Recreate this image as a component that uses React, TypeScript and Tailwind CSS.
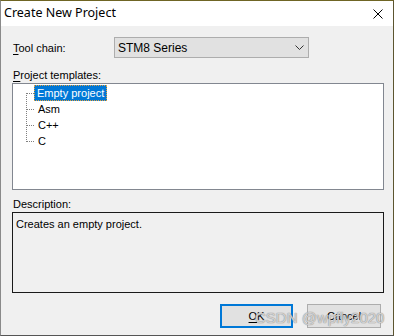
import React from "react"

// Classic Win32 "Create New Project" dialog
const ui = { fontFamily: '"Liberation Sans", Arial, sans-serif' }
const title = { fontFamily: '"Noto Sans", "Open Sans", sans-serif' }

const templates = ["Empty project", "Asm", "C++", "C"]

function TreeLines() {
  // dotted connectors, drawn relative to the tree's padding box
  const ys = [9, 25, 41, 57]
  return (
    <svg className="absolute left-0 top-0" width="40" height="80">
      <line x1="13.5" y1="9" x2="13.5" y2="58" stroke="#808080" strokeDasharray="1 1" />
      {ys.map((y) => (
        <line key={y} x1="14" y1={y + 0.5} x2="21" y2={y + 0.5} stroke="#808080" strokeDasharray="1 1" />
      ))}
    </svg>
  )
}

export default function App() {
  return (
    <div
      className="relative w-[394px] h-[336px] flex flex-col bg-[#f0f0f0] border-t border-t-[#6f6524] border-l border-l-[#8a8a8a] border-r border-r-[#5c5530] border-b border-b-[#555555] text-[11px] text-black overflow-hidden"
      style={ui}
    >
      {/* title bar */}
      <div className="h-[25px] bg-white flex items-center justify-between pl-[3px] pr-[10px]">
        <span className="text-[12.5px] leading-none" style={title}>Create New Project</span>
        <svg width="10" height="10" viewBox="0 0 10 10">
          <path d="M0.5 0.5 L9.5 9.5 M9.5 0.5 L0.5 9.5" stroke="#000" strokeWidth="1" />
        </svg>
      </div>

      <div className="flex flex-col pl-[11px]">
        {/* tool chain */}
        <div className="flex items-center mt-[11px] h-[21px]">
          <span className="w-[102px] pl-[1px] pt-[1px]">
            <span className="underline underline-offset-2">T</span>ool chain:
          </span>
          <div className="w-[195px] h-[21px] bg-[#e1e1e1] border border-[#adadad] flex items-center justify-between pl-[3px] pr-[4px]">
            <span className="text-[12px]">STM8 Series</span>
            <svg width="9" height="5" viewBox="0 0 9 5">
              <path d="M0.5 0.5 L4.5 4.5 L8.5 0.5" fill="none" stroke="#333" strokeWidth="1" />
            </svg>
          </div>
        </div>

        {/* project templates */}
        <div className="mt-[10px] h-[15px] pl-[1px] leading-[15px]">
          <span className="underline underline-offset-2">P</span>roject templates:
        </div>
        <div className="relative w-[372px] h-[107px] bg-white border border-[#828790] pt-[1px]">
          <TreeLines />
          <div className="flex flex-col pl-[21px]">
            {templates.map((t, i) => (
              <div key={t} className="h-[16px] flex items-center">
                <span
                  className={
                    i === 0
                      ? "h-[16px] px-[3px] flex items-center bg-[#0078d7] text-white outline-1 outline-dotted outline-[#e0a040] -outline-offset-1"
                      : "h-[16px] px-[4px] flex items-center"
                  }
                >
                  {t}
                </span>
              </div>
            ))}
          </div>
        </div>

        {/* description */}
        <div className="mt-[6px] h-[16px] pl-[1px] leading-[16px]">Description:</div>
        <div className="w-[372px] h-[81px] border border-[#1a1a1a] bg-[#f0f0f0] px-[3px] pt-[3px]">
          Creates an empty project.
        </div>

        {/* buttons */}
        <div className="flex mt-[11px] pl-[208px] gap-[14px]">
          <button className="w-[73px] h-[24px] bg-[#e1e1e1] border-2 border-[#0078d7] text-[11px]">
            <span className="underline underline-offset-2">O</span>K
          </button>
          <button className="w-[74px] h-[24px] bg-[#e1e1e1] border border-[#adadad] text-[11px]">
            Cancel
          </button>
        </div>
      </div>

      {/* CSDN watermark */}
      <span
        className="absolute left-[254px] top-[309px] text-[15px] leading-none whitespace-nowrap text-white/60 pointer-events-none"
        style={{ fontFamily: '"Liberation Sans", Arial, sans-serif', textShadow: "0 0 1px #8c8c8c, 0 0 1px #8c8c8c" }}
      >
        CSDN @wpfly2020
      </span>
    </div>
  )
}
